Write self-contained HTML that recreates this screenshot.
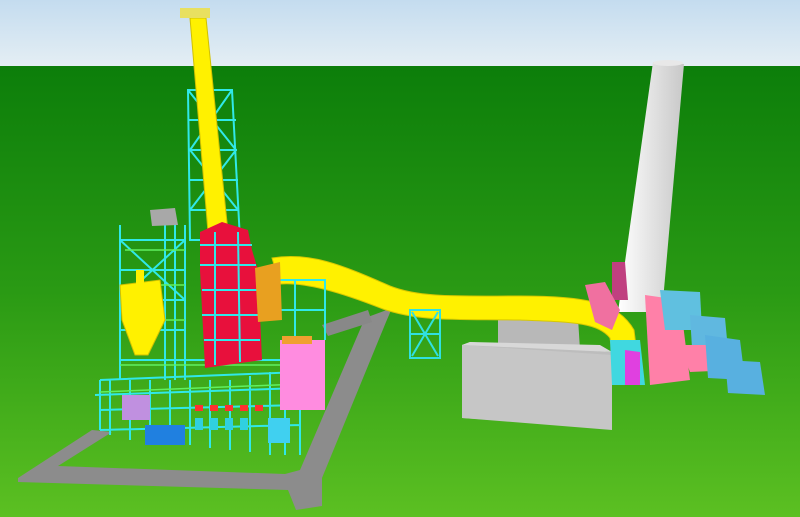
<!DOCTYPE html>
<html><head><meta charset="utf-8"><style>html,body{margin:0;padding:0;width:800px;height:517px;overflow:hidden}svg{display:block}</style></head><body>
<svg width="800" height="517" viewBox="0 0 800 517" xmlns="http://www.w3.org/2000/svg">
<defs>
<linearGradient id="sky" x1="0" y1="0" x2="0" y2="1"><stop offset="0" stop-color="#c4dcef"/><stop offset="1" stop-color="#e4eef4"/></linearGradient>
<linearGradient id="gr" x1="0" y1="0" x2="0" y2="1"><stop offset="0" stop-color="#0c7e0a"/><stop offset="0.5" stop-color="#2a9a14"/><stop offset="1" stop-color="#5cc022"/></linearGradient>
<linearGradient id="ch" x1="0" y1="0" x2="1" y2="0"><stop offset="0" stop-color="#ffffff"/><stop offset="1" stop-color="#c8c8c8"/></linearGradient>
</defs>
<rect width="800" height="66" fill="url(#sky)"/>
<rect y="66" width="800" height="451" fill="url(#gr)"/>
<!-- road -->
<path d="M18,478 L92,430 L112,432 L58,466 L285,474 L300,470 L365,318 L392,308 L386,322 L322,478 L322,506 L296,510 L288,490 L18,482 Z" fill="#8c8c8c"/>
<path d="M322,325 L368,310 L372,322 L328,336 Z" fill="#888"/>
<!-- white chimney -->
<polygon points="653,62 684,64 662,312 618,312" fill="url(#ch)"/>
<ellipse cx="668" cy="63" rx="15" ry="3" fill="#e8e8e8"/>
<!-- gray boxes -->
<polygon points="498,318 578,318 580,350 498,350" fill="#b8b8b8"/>
<polygon points="462,345 470,342 612,352 612,428 462,418" fill="#bdbdbd"/>
<polygon points="470,342 600,345 612,352 462,345" fill="#d8d8d8"/>
<polygon points="462,345 612,355 612,430 462,418" fill="#c6c6c6"/>
<!-- yellow duct -->
<path d="M272,258 C310,252 340,264 390,286 C420,298 460,296 520,296 C585,296 618,302 634,330 L638,362 L614,364 L610,338 C598,322 570,322 520,320 C460,319 420,322 383,309 C340,292 305,282 280,284 Z" fill="#fff100" stroke="#d8c800" stroke-width="1"/>
<!-- right equipment -->
<polygon points="612,262 625,262 628,300 612,300" fill="#c04080"/>
<polygon points="585,285 605,282 620,310 612,330 595,322" fill="#f070a0"/>
<polygon points="645,295 680,300 690,380 650,385" fill="#ff80a8"/>
<polygon points="660,290 700,292 702,330 665,330" fill="#60c0e0"/>
<polygon points="690,315 725,318 728,350 692,348" fill="#60b8e0"/>
<polygon points="680,345 720,345 735,370 690,372" fill="#ff80a8"/>
<polygon points="705,335 740,340 745,380 708,378" fill="#58b0e0"/>
<polygon points="725,360 760,362 765,395 728,393" fill="#58b0e0"/>
<polygon points="610,340 640,340 645,385 612,385" fill="#40d8e0"/>
<polygon points="625,350 640,352 640,385 625,385" fill="#e040e0"/>
<!-- small trestle -->
<g stroke="#30e0e0" stroke-width="2" fill="none"><path d="M410,310 L440,310 L440,358 L410,358 Z M410,334 L440,334 M412,312 L438,356 M438,312 L412,356"/></g>
<!-- main frame -->
<g stroke="#30e8e8" stroke-width="2" fill="none">
<path d="M100,380 L300,372 L300,455 M100,380 L100,430 M120,360 L300,360 M150,380 L150,440 M190,380 L190,445 M230,380 L230,450 M270,372 L270,455 M100,410 L300,405 M95,395 L300,388 M120,225 L120,380 M165,225 L165,380 M185,225 L185,380 M120,240 L185,240 M120,270 L185,270 M120,300 L185,300 M120,330 L185,330 M120,360 L185,360 M120,240 L185,300 M185,240 L120,300 M275,280 L325,280 L325,340 M275,310 L325,310 M295,280 L295,345 M110,380 L110,435 M130,380 L130,440 M170,380 L170,442 M210,380 L210,448 M250,376 L250,452 M285,372 L285,455 M100,430 L300,425 M175,225 L175,380"/>
<path d="M188,90 L232,90 L240,240 L190,240 Z M188,120 L236,120 M188,150 L237,150 M190,180 L238,180 M190,210 L239,210 M188,90 L236,150 M232,90 L190,150 M190,150 L238,210 M236,150 L190,210"/>
</g>
<g stroke="#60f060" stroke-width="1.5" fill="none"><path d="M100,392 L300,384 M120,365 L300,365 M125,250 L185,250 M125,285 L185,285 M125,320 L185,320"/></g>
<!-- yellow stack -->
<polygon points="190,18 206,18 228,232 208,232" fill="#fff100" stroke="#d0c000"/>
<rect x="180" y="8" width="30" height="10" fill="#e8e060"/>
<!-- yellow cyclone -->
<path d="M120,285 L160,280 L165,320 L148,355 L135,355 L122,320 Z" fill="#fff100" stroke="#d0c000"/>
<rect x="136" y="270" width="8" height="15" fill="#fff100"/>
<!-- red boiler -->
<path d="M200,232 L222,222 L248,230 L252,250 L258,270 L262,360 L205,368 L200,270 Z" fill="#e8103c"/>
<g stroke="#30e8e8" stroke-width="2" fill="none"><path d="M200,245 L252,245 M200,265 L256,265 M202,290 L258,290 M202,315 L260,315 M204,340 L260,340 M215,232 L215,365 M238,232 L240,362"/></g>
<!-- orange block -->
<polygon points="255,268 280,262 282,320 258,322" fill="#e8a020"/>
<!-- pink vessel -->
<rect x="280" y="340" width="45" height="70" fill="#ff8ce0"/>
<rect x="282" y="336" width="30" height="8" fill="#f0a030"/>
<!-- gray box top -->
<polygon points="150,210 175,208 178,225 152,226" fill="#a8a8a8"/>
<!-- bottom equipment -->
<rect x="145" y="425" width="40" height="20" fill="#2080e0"/>
<rect x="122" y="395" width="28" height="25" fill="#c090e0"/>
<rect x="268" y="418" width="22" height="25" fill="#40d0f0"/>
<g fill="#ff3030"><rect x="195" y="405" width="8" height="6"/><rect x="210" y="405" width="8" height="6"/><rect x="225" y="405" width="8" height="6"/><rect x="240" y="405" width="8" height="6"/><rect x="255" y="405" width="8" height="6"/></g>
<g fill="#30d0e0"><rect x="195" y="418" width="8" height="12"/><rect x="210" y="418" width="8" height="12"/><rect x="225" y="418" width="8" height="12"/><rect x="240" y="418" width="8" height="12"/></g>
</svg>
</body></html>
